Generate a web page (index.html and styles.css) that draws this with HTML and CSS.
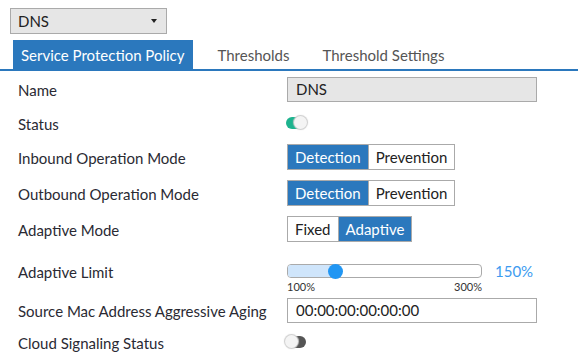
FILE: index.html
```html
<!DOCTYPE html>
<html lang="en">
<head>
    <meta charset="UTF-8">
    <title>Service Protection Policy</title>
    <link rel="stylesheet" href="styles.css">
</head>
<body>
    <div class="page">
        <!-- Policy selector -->
        <div class="select">
            <span>DNS</span>
            <span class="caret"></span>
        </div>

        <!-- Tabs -->
        <div class="tabs">
            <span class="tab active">Service Protection Policy</span>
            <span class="tab">Thresholds</span>
            <span class="tab">Threshold Settings</span>
        </div>

        <div class="form">
            <div class="row">
                <span class="label">Name</span>
                <div class="input readonly">DNS</div>
            </div>
            <div class="row row-status">
                <span class="label">Status</span>
                <span class="toggle on"><span class="knob"></span></span>
            </div>
            <div class="row">
                <span class="label">Inbound Operation Mode</span>
                <div class="btn-group">
                    <span class="btn selected">Detection</span>
                    <span class="btn">Prevention</span>
                </div>
            </div>
            <div class="row">
                <span class="label">Outbound Operation Mode</span>
                <div class="btn-group">
                    <span class="btn selected">Detection</span>
                    <span class="btn">Prevention</span>
                </div>
            </div>
            <div class="row">
                <span class="label">Adaptive Mode</span>
                <div class="btn-group">
                    <span class="btn">Fixed</span>
                    <span class="btn selected">Adaptive</span>
                </div>
            </div>
            <div class="row row-limit">
                <span class="label">Adaptive Limit</span>
                <div class="slider-wrap">
                    <div class="slider-line">
                        <div class="slider">
                            <div class="slider-track">
                                <div class="slider-fill" style="width: 48px;"></div>
                                <div class="slider-thumb" style="left: 40px;"></div>
                            </div>
                            <div class="slider-scale">
                                <span>100%</span>
                                <span>300%</span>
                            </div>
                        </div>
                        <span class="slider-value">150%</span>
                    </div>
                </div>
            </div>
            <div class="row row-mac">
                <span class="label">Source Mac Address Aggressive Aging</span>
                <div class="input">00:00:00:00:00:00</div>
            </div>
            <div class="row row-cloud">
                <span class="label">Cloud Signaling Status</span>
                <span class="toggle"><span class="knob"></span></span>
            </div>
        </div>
    </div>
</body>
</html>
```

FILE: styles.css
```css
/* base */
body {
    margin: 0;
    font-family: Lato, "Open Sans", sans-serif;
    font-size: 14px;
    color: #333;
    background: #fff;
}

.page {
    width: 578px;
    height: 360px;
    padding-top: 8px;
    box-sizing: border-box;
    overflow: hidden;
}

/* selector */
.select {
    margin-left: 10px;
    width: 157px;
    height: 26px;
    box-sizing: border-box;
    border: 1px solid #aaa;
    background: #e6e6e6;
    display: flex;
    align-items: center;
    justify-content: space-between;
    padding: 0 9px 0 7px;
    font-size: 15px;
    color: #222;
}

.caret {
    width: 0;
    height: 0;
    border-left: 3px solid transparent;
    border-right: 3px solid transparent;
    border-top: 4px solid #222;
}

/* tabs */
.tabs {
    margin-top: 6px;
    padding-left: 13px;
    height: 29px;
    border-bottom: 2px solid #2b78bd;
    display: flex;
    gap: 17px;
}

.tab {
    padding: 0 8px;
    display: flex;
    align-items: center;
    font-size: 15px;
    color: #555;
}

.tab.active {
    background: #2b78bd;
    color: #fff;
}

/* form rows */
.row {
    height: 36px;
    padding-left: 18px;
    display: flex;
    align-items: center;
}

.row-status {
    height: 32px;
}

.row-limit {
    height: 46px;
    align-items: flex-start;
}

.row-mac {
    height: 34px;
}

.row-cloud {
    height: 30px;
}

.label {
    width: 269px;
    flex-shrink: 0;
    padding-top: 2px;
    font-size: 15px;
    color: #2a2a33;
}

.row-limit .label {
    padding-top: 16px;
}

.input {
    width: 250px;
    height: 25px;
    box-sizing: border-box;
    border: 1px solid #aaa;
    padding: 0 8px;
    display: flex;
    align-items: center;
    font-size: 15px;
    color: #222;
    background: #fff;
}

.input.readonly {
    background: #e6e6e6;
}

/* toggles */
.toggle {
    position: relative;
    width: 20px;
    height: 12px;
    border-radius: 6px;
    background: #555;
    margin-left: -1px;
}

.toggle.on {
    background: #1db38e;
}

.knob {
    position: absolute;
    top: -1px;
    left: -1px;
    width: 13px;
    height: 13px;
    border-radius: 50%;
    background: #f4f4f4;
    box-shadow: 0 0 1px 1px #ccc;
}

.toggle.on .knob {
    left: 8px;
}

/* button groups */
.btn-group {
    display: flex;
    border: 1px solid #aaa;
    height: 26px;
    box-sizing: border-box;
}

.btn {
    padding: 0 7px;
    display: flex;
    align-items: center;
    font-size: 15px;
    color: #222;
    background: #fff;
}

.btn + .btn {
    border-left: 1px solid #aaa;
}

.btn.selected {
    background: #2b78bd;
    color: #fff;
}

/* slider */
.slider-wrap {
    padding-top: 17px;
}

.slider-line {
    display: flex;
    align-items: flex-start;
}

.slider {
    width: 195px;
}

.slider-track {
    position: relative;
    height: 14px;
    box-sizing: border-box;
    border: 1px solid #aaa;
    border-radius: 4px;
    background: #fff;
}

.slider-fill {
    height: 100%;
    background: #cfe5fb;
    border-radius: 3px 0 0 3px;
}

.slider-thumb {
    position: absolute;
    top: -1.5px;
    width: 15px;
    height: 15px;
    border-radius: 50%;
    background: #2196f3;
}

.slider-scale {
    display: flex;
    justify-content: space-between;
    font-size: 11px;
    line-height: 13px;
    margin-top: 2px;
    color: #333;
}

.slider-value {
    margin-left: 13px;
    margin-top: -2px;
    font-size: 15px;
    color: #3c9bf0;
}
```
